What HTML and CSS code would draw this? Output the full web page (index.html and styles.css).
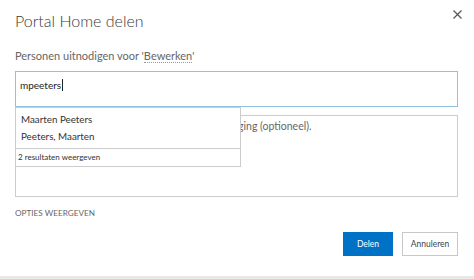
FILE: index.html
```html
<!DOCTYPE html>
<html lang="nl">
<head>
<meta charset="utf-8">
<title>Portal Home delen</title>
<link rel="stylesheet" href="styles.css">
</head>
<body>
<div class="dialog">
  <div class="header">
    <h1 class="title">Portal Home delen</h1>
    <button class="close" aria-label="Sluiten">
      <svg width="9" height="9" viewBox="0 0 9 9"><path d="M0.5 0.5 L8.5 8.5 M8.5 0.5 L0.5 8.5" stroke="#555" stroke-width="1.2" fill="none"/></svg>
    </button>
  </div>
  <div class="label">Personen uitnodigen voor '<span class="perm">Bewerken</span>'</div>
  <div class="field">
    <div class="picker"><span class="typed">mpeeters</span><span class="caret"></span></div>
    <div class="suggest">
      <div class="item">Maarten Peeters</div>
      <div class="item">Peeters, Maarten</div>
      <div class="more">2 resultaten weergeven</div>
    </div>
  </div>
  <div class="message">Voeg een persoonlijk bericht toe aan de uitnodiging (optioneel).</div>
  <div class="options">OPTIES WEERGEVEN</div>
  <div class="actions">
    <button class="btn primary">Delen</button>
    <button class="btn">Annuleren</button>
  </div>
</div>
<div class="footer-bar"></div>
</body>
</html>
```

FILE: styles.css
```css
html, body {
  margin: 0;
  padding: 0;
  background: #fff;
}
body {
  width: 474px;
  height: 279px;
  overflow: hidden;
  font-family: Lato, "Open Sans", sans-serif;
  color: #333;
  position: relative;
}
.dialog {
  padding: 0 16px 0 15px;
}
.header {
  display: flex;
  justify-content: space-between;
  align-items: flex-start;
  height: 48px;
}
.title {
  margin: 10px 0 0 0;
  font-size: 16px;
  font-weight: 300;
  color: #3a3a3a;
  line-height: 22px;
}
.close {
  margin: 10px -4px 0 0;
  padding: 0;
  border: 0;
  background: none;
  width: 9px;
  height: 9px;
  display: block;
  line-height: 0;
}
.label {
  font-size: 11px;
  color: #666;
  line-height: 16px;
  height: 23px;
}
.perm {
  border-bottom: 1px dotted #999;
}
.field {
  position: relative;
}
.picker {
  height: 34px;
  border: 1px solid #92c0e0;
  padding: 0 4px;
  display: flex;
  align-items: flex-start;
  font-size: 10px;
  color: #222;
  line-height: 22px;
}
.typed {
  padding-top: 2px;
}
.caret {
  display: inline-block;
  width: 1px;
  height: 12px;
  background: #222;
  margin-top: 7px;
  margin-left: 1px;
}
.suggest {
  position: absolute;
  left: 0;
  top: 36px;
  width: 224px;
  background: #fff;
  border: 1px solid #ccc;
  z-index: 2;
  font-size: 9.8px;
  color: #333;
}
.item {
  line-height: 17px;
  padding-left: 5px;
  height: 17px;
}
.item:first-child {
  margin-top: 3px;
}
.item:nth-child(2) {
  height: 20px;
}
.more {
  border-top: 1px solid #ccc;
  font-size: 8px;
  line-height: 17px;
  height: 17px;
  padding-left: 2px;
}
.message {
  margin-top: 8px;
  border: 1px solid #ccc;
  font-size: 10.5px;
  color: #666;
  line-height: 18px;
  padding: 1px 5px;
  height: 78px;
}
.options {
  margin-top: 10px;
  font-size: 8.2px;
  color: #666;
  line-height: 12px;
}
.actions {
  margin-top: 13px;
  display: flex;
  justify-content: flex-end;
  gap: 9px;
}
.btn {
  height: 24px;
  padding: 0;
  font-family: Lato, "Open Sans", sans-serif;
  font-size: 8.5px;
  border: 1px solid #c8c8c8;
  background: #fff;
  color: #444;
  width: 56px;
}
.btn.primary {
  background: #0072c6;
  border-color: #0072c6;
  color: #fff;
  width: 50px;
}
.footer-bar {
  position: absolute;
  left: 0;
  right: 0;
  bottom: 0;
  height: 3px;
  background: #e8e8e8;
}
```
